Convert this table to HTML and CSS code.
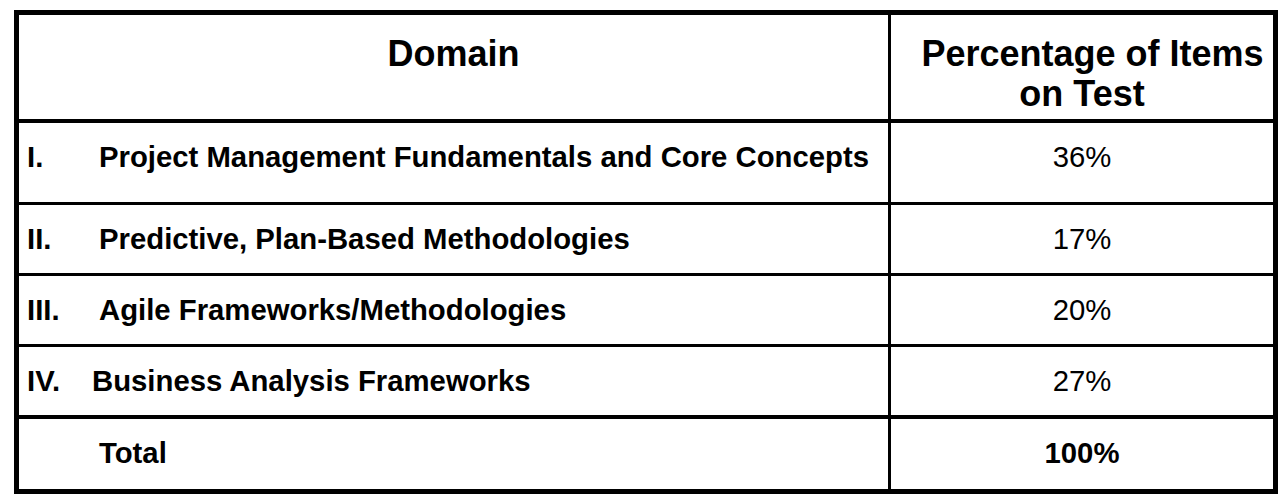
FILE: index.html
```html
<!DOCTYPE html>
<html lang="en">
<head>
<meta charset="utf-8">
<title>Domains</title>
<link rel="stylesheet" href="styles.css">
</head>
<body>
<div class="grid">
  <div class="row head">
    <div class="cell domain"><span class="hline">Domain</span></div>
    <div class="cell pct"><span class="hline first">Percentage of Items</span><span class="hline">on Test</span></div>
  </div>
  <div class="row r1 sep-thick">
    <div class="cell domain"><span class="num">I.</span><span class="label">Project Management Fundamentals and Core Concepts</span></div>
    <div class="cell pct">36%</div>
  </div>
  <div class="row">
    <div class="cell domain"><span class="num">II.</span><span class="label">Predictive, Plan-Based Methodologies</span></div>
    <div class="cell pct">17%</div>
  </div>
  <div class="row">
    <div class="cell domain"><span class="num">III.</span><span class="label">Agile Frameworks/Methodologies</span></div>
    <div class="cell pct">20%</div>
  </div>
  <div class="row">
    <div class="cell domain"><span class="num short">IV.</span><span class="label">Business Analysis Frameworks</span></div>
    <div class="cell pct">27%</div>
  </div>
  <div class="row total sep-thick">
    <div class="cell domain"><span class="num"></span><span class="label">Total</span></div>
    <div class="cell pct strong">100%</div>
  </div>
</div>
</body>
</html>
```
FILE: styles.css
```css
html, body {
  margin: 0;
  padding: 0;
  background: #fff;
}
body {
  font-family: "Liberation Sans", Arial, sans-serif;
  color: #000;
}
.grid {
  width: 1254px;
  margin: 10px 0 0 14px;
  border: 5px solid #000;
}
.row {
  display: flex;
  height: 68px;
  border-top: 3px solid #000;
}
.row.head {
  height: 104px;
  border-top: 0;
}
.row.sep-thick {
  border-top-width: 4px;
}
.row.r1 {
  height: 79px;
}
.row.total {
  height: 70px;
}
.cell {
  box-sizing: border-box;
  font-size: 29.3px;
  line-height: 34px;
  padding-top: 17px;
}
.cell.domain {
  width: 872px;
  border-right: 3px solid #000;
  display: flex;
  font-weight: bold;
  padding-left: 8px;
}
.cell.pct {
  flex: 1;
  text-align: center;
}
.cell.strong {
  font-weight: bold;
}
.head .cell {
  font-size: 36px;
  line-height: 40px;
  font-weight: bold;
  padding-top: 19px;
}
.head .cell.domain {
  justify-content: center;
  padding-left: 0;
}
.hline {
  display: block;
}
.hline.first {
  padding-left: 21px;
  white-space: nowrap;
}
.num {
  width: 72px;
  flex: none;
}
.num.short {
  width: 65px;
}
```
